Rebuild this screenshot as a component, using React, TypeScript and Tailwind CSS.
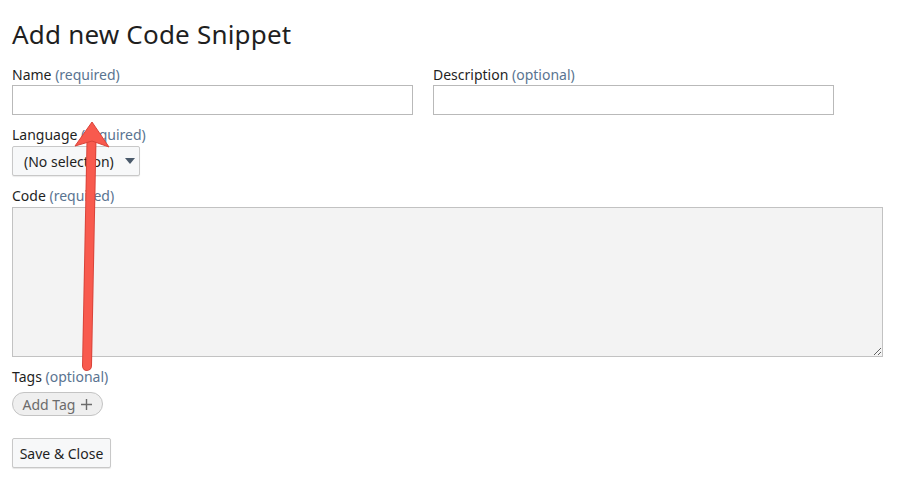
import React from 'react';

const Label = ({ name, hint }: { name: string; hint: string }) => (
  <label className="block text-[14px] leading-[20px] text-[#1f1f1f]">
    {name} <span className="text-[#5a7491]">({hint})</span>
  </label>
);

export default function App() {
  return (
    <div className="relative h-[488px] w-[922px] bg-white px-3 pt-[16px] font-['Noto_Sans','Open_Sans',sans-serif] text-[#1f1f1f]">
      <h1 className="text-[26px] leading-[36px] font-normal tracking-[0.2px]">Add new Code Snippet</h1>

      <div className="mt-[13px] flex gap-[20px]">
        <div className="w-[401px]">
          <Label name="Name" hint="required" />
          <input className="block h-[30px] w-full border border-[#b9b9b9] bg-white" />
        </div>
        <div className="w-[401px]">
          <Label name="Description" hint="optional" />
          <input className="block h-[30px] w-full border border-[#b9b9b9] bg-white" />
        </div>
      </div>

      <div className="mt-[10px]">
        <Label name="Language" hint="required" />
        <button className="mt-[1px] flex h-[30px] w-[128px] items-center gap-[11px] rounded-[2px] border border-[#c8c8c8] bg-[#f7f8f9] pl-[11px] text-[14px] shadow-[0_1px_1px_rgba(0,0,0,0.08)]">
          (No selection)
          <svg width="10" height="6" viewBox="0 0 10 6"><path d="M0 0h10L5 6z" fill="#4a5a6b" /></svg>
        </button>
      </div>

      <div className="mt-[10px]">
        <Label name="Code" hint="required" />
        <textarea className="mt-[1px] block h-[150px] w-[871px] resize border border-[#c2c2c2] bg-[#f3f3f3]" />
      </div>

      <div className="mt-[10px]">
        <Label name="Tags" hint="optional" />
        <button className="mt-[5px] flex h-[24px] w-[91px] items-center justify-center gap-[6px] rounded-full border border-[#c4c4c4] bg-[#efefef] text-[14px] text-[#6b6b6b]">
          Add Tag
          <svg width="11" height="11" viewBox="0 0 11 11"><path d="M5.5 0v11M0 5.5h11" stroke="#6b6b6b" strokeWidth="1.4" /></svg>
        </button>
      </div>

      <button className="mt-[22px] h-[30px] w-[99px] rounded-[2px] border border-[#c8c8c8] bg-[#f7f8f9] text-[14px] shadow-[0_1px_1px_rgba(0,0,0,0.1)]">
        Save &amp; Close
      </button>

      {/* annotation arrow */}
      <svg className="pointer-events-none absolute left-0 top-0" width="922" height="488">
        <line x1="87" y1="366" x2="91.5" y2="140" stroke="#d9443a" strokeWidth="10" strokeLinecap="round" />
        <line x1="87" y1="366" x2="91.5" y2="140" stroke="#f85a4e" strokeWidth="8" strokeLinecap="round" />
        <path d="M92 122 L109 147 L92 141 L75 146 Z" fill="#f85a4e" stroke="#d9443a" strokeWidth="1" strokeLinejoin="round" />
      </svg>
    </div>
  );
}
